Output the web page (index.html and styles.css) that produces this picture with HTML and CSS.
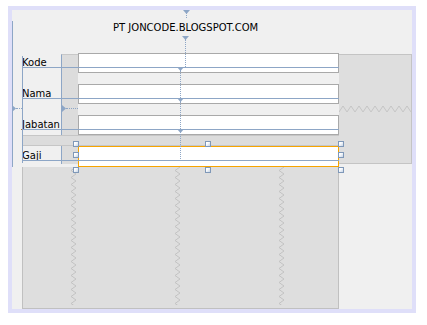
FILE: index.html
```html
<!DOCTYPE html>
<html lang="id">

<head>
    <meta charset="UTF-8">
    <meta name="viewport" content="width=device-width, initial-scale=1.0">
    <title>Form Pegawai</title>
    <link rel="stylesheet" href="styles.css">
</head>

<body>

    <div id="frame">
        <div id="canvas">
            <div class="judul">PT JONCODE.BLOGSPOT.COM</div>

            <div class="form">
                <span class="lbl baris1">Kode</span>
                <span class="lbl baris3">Nama</span>
                <span class="lbl baris5">Jabatan</span>
                <span class="lbl baris7">Gaji</span>

                <div class="kolom"></div>

                <div class="isian baris1"></div>
                <div class="isian baris3"></div>
                <div class="isian baris5"></div>
                <div class="pita"></div>
                <div class="isian baris7 pilih"></div>

                <div class="panel-kanan">
                    <svg class="zigzag" width="100%" height="100%">
                        <defs>
                            <pattern id="zzH" width="8" height="8" patternUnits="userSpaceOnUse">
                                <polyline points="0,7 4,1 8,7" fill="none" stroke="#c4c4c4" stroke-width="1" />
                            </pattern>
                        </defs>
                        <g transform="translate(0,50)">
                            <rect x="0" y="0" width="73" height="8" fill="url(#zzH)" />
                        </g>
                    </svg>
                </div>

                <div class="panel-bawah">
                    <svg class="zigzag" width="100%" height="100%">
                        <defs>
                            <pattern id="zzV" width="7" height="7" patternUnits="userSpaceOnUse">
                                <polyline points="6,0 1,3.5 6,7" fill="none" stroke="#c2c2c2" stroke-width="1" />
                            </pattern>
                        </defs>
                        <g transform="translate(47,0)">
                            <rect x="0" y="0" width="7" height="138" fill="url(#zzV)" />
                        </g>
                        <g transform="translate(151,0)">
                            <rect x="0" y="0" width="7" height="138" fill="url(#zzV)" />
                        </g>
                        <g transform="translate(255,0)">
                            <rect x="0" y="0" width="7" height="138" fill="url(#zzV)" />
                        </g>
                    </svg>
                </div>
            </div>

            <!-- garis bantu layout -->
            <div class="garis v1"></div>
            <div class="garis v2"></div>
            <div class="garis h" style="top:57px"></div>
            <div class="garis h" style="top:88px"></div>
            <div class="garis h" style="top:119px"></div>
            <div class="garis h" style="top:150px"></div>

            <div class="titik-v" style="left:174px; top:3px; height:5px"></div>
            <div class="titik-v" style="left:173px; top:29px; height:28px"></div>
            <div class="titik-v" style="left:168px; top:60px; height:28px"></div>
            <div class="titik-v" style="left:168px; top:91px; height:28px"></div>
            <div class="titik-v" style="left:168px; top:122px; height:27px"></div>

            <div class="titik-h" style="left:4px; width:6px"></div>
            <div class="titik-h" style="left:54px; width:12px"></div>

            <svg class="panah" style="left:171px; top:0" width="7" height="4"><polygon points="0,0 7,0 3.5,4" /></svg>
            <svg class="panah" style="left:170px; top:26px" width="7" height="4"><polygon points="0,0 7,0 3.5,4" /></svg>
            <svg class="panah" style="left:165px; top:57px" width="7" height="4"><polygon points="0,0 7,0 3.5,4" /></svg>
            <svg class="panah" style="left:165px; top:88px" width="7" height="4"><polygon points="0,0 7,0 3.5,4" /></svg>
            <svg class="panah" style="left:165px; top:119px" width="7" height="4"><polygon points="0,0 7,0 3.5,4" /></svg>

            <svg class="panah" style="left:0; top:95px" width="4" height="7"><polygon points="0,0 4,3.5 0,7" /></svg>
            <svg class="panah" style="left:50px; top:95px" width="4" height="7"><polygon points="0,0 4,3.5 0,7" /></svg>

            <!-- pegangan seleksi -->
            <div class="pegangan" style="left:61px; top:131px"></div>
            <div class="pegangan" style="left:193px; top:131px"></div>
            <div class="pegangan" style="left:326px; top:131px"></div>
            <div class="pegangan" style="left:61px; top:142px"></div>
            <div class="pegangan" style="left:326px; top:142px"></div>
            <div class="pegangan" style="left:61px; top:157px"></div>
            <div class="pegangan" style="left:193px; top:157px"></div>
            <div class="pegangan" style="left:326px; top:157px"></div>
        </div>
    </div>

</body>

</html>
```

FILE: styles.css
```css
* {
    margin: 0;
    padding: 0;
    box-sizing: border-box;
}

html,
body {
    width: 100%;
    height: 100%;
    background-color: #ffffff;
}

body {
    padding: 6px 0 0 8px;
    font-family: "DejaVu Sans", Verdana, sans-serif;
    font-size: 10px;
    color: #000000;
}

#frame {
    width: 408px;
    height: 307px;
    border: 4px solid #dfdff9;
    background-color: #f0f0f0;
}

#canvas {
    position: relative;
    width: 400px;
    height: 299px;
}

.judul {
    height: 43px;
    padding-top: 12px;
    padding-left: 101px;
    line-height: 11px;
    white-space: nowrap;
}

.form {
    display: grid;
    margin-left: 10px;
    grid-template-columns: 39px 17px 261px 73px;
    grid-template-rows: 20px 11px 20px 11px 20px 11px 21px 142px;
}

.baris1 { grid-row: 1; }
.baris3 { grid-row: 3; }
.baris5 { grid-row: 5; }
.baris7 { grid-row: 7; }

.lbl {
    grid-column: 1 / 3;
    line-height: 20px;
    white-space: nowrap;
    z-index: 2;
}

.kolom {
    grid-column: 2;
    grid-row: 1 / 8;
    margin-top: 1px;
    margin-bottom: 3px;
    background-color: #dcdcdc;
    border-left: 1px solid #8da6c6;
    border-top: 1px solid #c8c8c8;
}

.isian {
    grid-column: 3;
    background-color: #ffffff;
    border: 1px solid #a9a9a9;
    z-index: 1;
}

.isian.pilih {
    border-color: #f6a400;
}

.pita {
    grid-column: 1 / 4;
    grid-row: 6;
    background-color: #dcdcdc;
    border-top: 1px solid #c6c6c6;
    border-bottom: 1px solid #c6c6c6;
}

.panel-kanan {
    grid-column: 4;
    grid-row: 1 / 8;
    margin-top: 1px;
    margin-bottom: 3px;
    background-color: #dedede;
    border: 1px solid #c4c4c4;
    border-left: none;
}

.panel-bawah {
    grid-column: 1 / 4;
    grid-row: 8;
    background-color: #dedede;
    border: 1px solid #c0c0c0;
    border-top: none;
}

.zigzag {
    display: block;
}

.garis {
    position: absolute;
    background-color: #8da6c6;
    z-index: 3;
}

.garis.h {
    left: 10px;
    width: 317px;
    height: 1px;
}

.garis.v1 {
    left: 0;
    top: 11px;
    width: 1px;
    height: 146px;
}

.garis.v2 {
    left: 10px;
    top: 46px;
    width: 1px;
    height: 107px;
}

.titik-v {
    position: absolute;
    width: 0;
    border-left: 1px dotted #8da6c6;
    z-index: 3;
}

.titik-h {
    position: absolute;
    top: 98px;
    height: 0;
    border-top: 1px dotted #8da6c6;
    z-index: 3;
}

.panah {
    position: absolute;
    fill: #8da6c6;
    z-index: 4;
}

.pegangan {
    position: absolute;
    width: 6px;
    height: 6px;
    border: 1px solid #7f98b8;
    background: linear-gradient(135deg, #ffffff 30%, #c6d4e6);
    z-index: 5;
}
```
